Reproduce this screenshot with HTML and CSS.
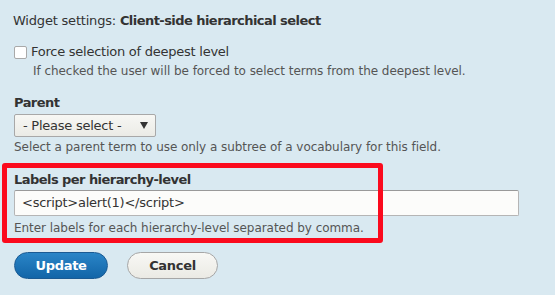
FILE: index.html
```html
<!DOCTYPE html>
<html>
<head>
<meta charset="utf-8">
<link rel="stylesheet" href="styles.css">
</head>
<body>
<div class="page">
  <div class="title">Widget settings: <strong>Client-side hierarchical select</strong></div>

  <div class="item item-check">
    <label class="check-label"><span class="box"></span>Force selection of deepest level</label>
    <div class="desc desc-indent">If checked the user will be forced to select terms from the deepest level.</div>
  </div>

  <div class="item item-parent">
    <div class="label">Parent</div>
    <div class="select"><span class="select-text">- Please select -</span><svg class="arrow" width="8" height="7" viewBox="0 0 8 7"><path d="M0 0H8L4 7Z" fill="#333"/></svg></div>
    <div class="desc">Select a parent term to use only a subtree of a vocabulary for this field.</div>
  </div>

  <div class="item item-labels">
    <div class="label">Labels per hierarchy-level</div>
    <div class="input">&lt;script&gt;alert(1)&lt;/script&gt;</div>
    <div class="desc desc-last">Enter labels for each hierarchy-level separated by comma.</div>
    <div class="mark"></div>
  </div>

  <div class="actions">
    <button class="btn btn-primary">Update</button>
    <button class="btn btn-default">Cancel</button>
  </div>
</div>
</body>
</html>
```

FILE: styles.css
```css
html, body {
  margin: 0;
  padding: 0;
  background: #d9e9f1;
}
body {
  font-family: "DejaVu Sans", Verdana, sans-serif;
  font-size: 13px;
  color: #333;
  width: 555px;
  height: 295px;
  overflow: hidden;
}
.page {
  padding: 12px 0 0 13px;
}
.title {
  line-height: 18px;
  font-size: 13px;
  color: #333;
  letter-spacing: -0.2px;
}
.title strong {
  font-weight: bold;
  letter-spacing: -0.55px;
}
.item {
  display: flex;
  flex-direction: column;
  align-items: flex-start;
}
.item-check {
  margin-top: 13px;
  padding-left: 1px;
}
.check-label {
  display: flex;
  align-items: center;
  line-height: 18px;
  color: #333;
  letter-spacing: -0.25px;
}
.box {
  width: 11px;
  height: 11px;
  background: #fff;
  border: 1px solid #a9a9a9;
  border-radius: 2px;
  margin-right: 4px;
  margin-top: 1px;
}
.desc {
  font-size: 12px;
  line-height: 17px;
  color: #555;
  margin-top: 2px;
  letter-spacing: -0.05px;
}
.desc-indent {
  padding-left: 19px;
}
.item-parent {
  margin-top: 14px;
  padding-left: 1px;
}
.label {
  font-weight: bold;
  line-height: 18px;
  letter-spacing: -0.55px;
}
.select {
  margin-top: 2px;
  box-sizing: border-box;
  width: 142px;
  height: 23px;
  border: 1px solid #a8a8a8;
  border-radius: 2px;
  background: linear-gradient(#f7f7f4, #ebebe6);
  display: flex;
  align-items: center;
  padding: 0 7px 0 8px;
  justify-content: space-between;
  color: #333;
  letter-spacing: -0.25px;
}
.item-labels {
  margin-top: 15px;
  padding-left: 1px;
  position: relative;
}
.input {
  margin-top: 1px;
  box-sizing: border-box;
  width: 505px;
  height: 26px;
  border: 1px solid #b5b5b5;
  border-top-color: #999;
  border-radius: 2px;
  background: #fcfcfa;
  padding: 0 7px;
  line-height: 24px;
  color: #333;
  letter-spacing: -0.25px;
}
.desc-last {
  margin-top: 4px;
}
.mark {
  position: absolute;
  left: -11px;
  top: -8px;
  width: 381px;
  height: 80px;
  border: 5px solid #fb0a1d;
  border-radius: 3px;
  box-sizing: border-box;
  pointer-events: none;
}
.actions {
  margin-top: 15px;
  padding-left: 1px;
  display: flex;
  gap: 19px;
}
.btn {
  font-family: "DejaVu Sans", Verdana, sans-serif;
  font-size: 13px;
  font-weight: bold;
  height: 27px;
  border-radius: 14px;
  box-sizing: border-box;
  padding: 0;
  cursor: pointer;
  letter-spacing: -0.3px;
}
.btn-primary {
  width: 94px;
  color: #fff;
  background: linear-gradient(#2a85c7, #1265a8);
  border: 1px solid #1a5a93;
}
.btn-default {
  width: 91px;
  color: #333;
  background: linear-gradient(#f8f8f5, #ebeae4);
  border: 1px solid #a6a6a6;
}
```
